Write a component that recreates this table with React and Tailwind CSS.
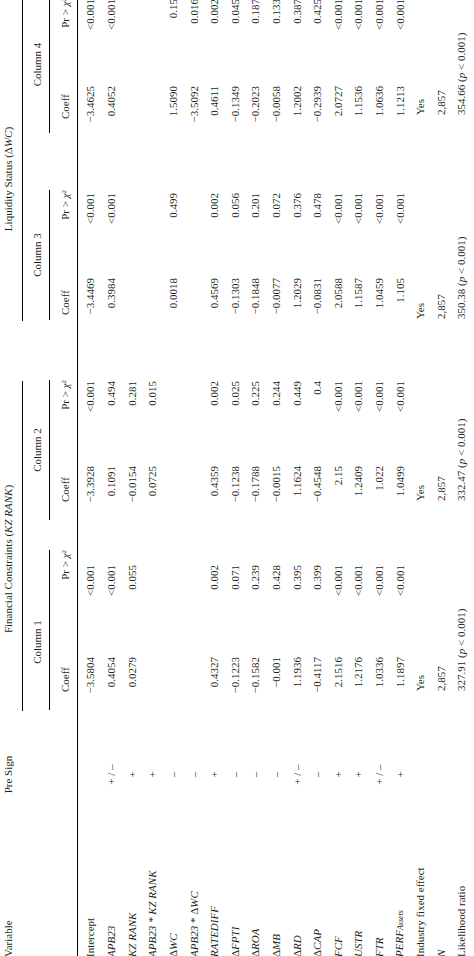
import React from "react";

// column cells (table is laid out unrotated, then turned a quarter turn)
const coeffCell = ["w-[115px] pr-[30px]", "w-[100px] pr-[29px]", "w-[100px] pr-[31px]", "w-[100px] pr-[29px]"];
const prCell = ["w-[90px] pr-[28px]", "w-[90px] pr-[34px]", "w-[90px] pr-[36px]", "w-[90px] pr-[32px]"];
const coeffHead = ["w-[115px] pl-[49px]", "w-[100px] pl-[34px]", "w-[100px] pl-[31px]", "w-[100px] pl-[37px]"];
const prHead = ["w-[90px] pr-[14px]", "w-[90px] pr-[34px]", "w-[90px] pr-[34px]", "w-[90px] pr-[32px]"];
const spanCell = ["w-[205px] pl-[51px]", "w-[190px] pl-[36px]", "w-[190px] pl-[28px]", "w-[190px] pl-[42px]"];

const I = ({ children }) => <span className="italic">{children}</span>;

const P = () => (
  <>
    (<I>p</I> &lt; 0.001)
  </>
);

const rows = [
  { label: "Intercept", vals: [["−3.5804", "<0.001"], ["−3.3928", "<0.001"], ["−3.4469", "<0.001"], ["−3.4625", "<0.001"]] },
  { label: <I>APB23</I>, sign: "+ / –", vals: [["0.4054", "<0.001"], ["0.1091", "0.494"], ["0.3984", "<0.001"], ["0.4052", "<0.001"]] },
  { label: <I>KZ RANK</I>, sign: "+", vals: [["0.0279", "0.055"], ["−0.0154", "0.281"], [], []] },
  { label: <I>APB23 * KZ RANK</I>, sign: "+", vals: [[], ["0.0725", "0.015"], [], []] },
  { label: <>Δ<I>WC</I></>, sign: "–", vals: [[], [], ["0.0018", "0.499"], ["1.5090", "0.15"]] },
  { label: <><I>APB23</I> * Δ<I>WC</I></>, sign: "–", vals: [[], [], [], ["−3.5092", "0.016"]] },
  { label: <I>RATEDIFF</I>, sign: "+", vals: [["0.4327", "0.002"], ["0.4359", "0.002"], ["0.4569", "0.002"], ["0.4611", "0.002"]] },
  { label: <>Δ<I>FPTI</I></>, sign: "–", vals: [["−0.1223", "0.071"], ["−0.1238", "0.025"], ["−0.1303", "0.056"], ["−0.1349", "0.045"]] },
  { label: <>Δ<I>ROA</I></>, sign: "–", vals: [["−0.1582", "0.239"], ["−0.1788", "0.225"], ["−0.1848", "0.201"], ["−0.2023", "0.187"]] },
  { label: <>Δ<I>MB</I></>, sign: "–", vals: [["−0.001", "0.428"], ["−0.0015", "0.244"], ["−0.0077", "0.072"], ["−0.0058", "0.133"]] },
  { label: <>Δ<I>RD</I></>, sign: "+ / –", vals: [["1.1936", "0.395"], ["1.1624", "0.449"], ["1.2029", "0.376"], ["1.2002", "0.387"]] },
  { label: <>Δ<I>CAP</I></>, sign: "–", vals: [["−0.4117", "0.399"], ["−0.4548", "0.4"], ["−0.0831", "0.478"], ["−0.2939", "0.425"]] },
  { label: <I>FCF</I>, sign: "+", vals: [["2.1516", "<0.001"], ["2.15", "<0.001"], ["2.0588", "<0.001"], ["2.0727", "<0.001"]] },
  { label: <I>USTR</I>, sign: "+", vals: [["1.2176", "<0.001"], ["1.2409", "<0.001"], ["1.1587", "<0.001"], ["1.1536", "<0.001"]] },
  { label: <I>FTR</I>, sign: "+ / –", vals: [["1.0336", "<0.001"], ["1.022", "<0.001"], ["1.0459", "<0.001"], ["1.0636", "<0.001"]] },
  {
    label: (
      <I>
        PERF<span className="text-[8px]">Assets</span>
      </I>
    ),
    sign: "+",
    vals: [["1.1897", "<0.001"], ["1.0499", "<0.001"], ["1.105", "<0.001"], ["1.1213", "<0.001"]],
  },
  { label: "Industry fixed effect", span: ["Yes", "Yes", "Yes", "Yes"] },
  { label: <I>N</I>, span: ["2,857", "2,857", "2,857", "2,857"] },
  {
    label: "Likelihood ratio",
    span: [
      <>327.91 <P /></>,
      <>332.47 <P /></>,
      <>350.38 <P /></>,
      <>354.66 <P /></>,
    ],
  },
];

const Chi = () => (
  <>
    Pr &gt; <I>χ</I>
    <sup className="text-[7px]">2</sup>
  </>
);

export default function App() {
  return (
    <div className="h-[956px] w-[474px] overflow-hidden bg-white">
      <div className="h-[474px] w-[990px] origin-top-left -rotate-90 translate-y-[956px] font-['Liberation_Serif',serif] text-[11px] text-[#231f20]">
        {/* ===== header row 1 ===== */}
        <div className="flex h-[23px] leading-[16px]">
          <div className="w-[150px] shrink-0 -ml-[1px]">Variable</div>
          <div className="w-[65px] shrink-0 text-center">Pre Sign</div>
          <div className="w-[31px] shrink-0" />
          <div className="w-[330px] shrink-0 border-b border-black pr-[26px] text-center">
            Financial Constraints (<I>KZ RANK</I>)
          </div>
          <div className="w-[60px] shrink-0" />
          <div className="w-[340px] shrink-0 border-b border-black pr-[56px] text-center">
            Liquidity Status (Δ<I>WC</I>)
          </div>
        </div>

        {/* ===== header row 2 ===== */}
        <div className="flex h-[27px] pt-[6px] leading-[16px]">
          <div className="w-[246px] shrink-0" />
          <div className="w-[160px] shrink-0 border-b border-black pr-[24px] text-center">Column 1</div>
          <div className="w-[30px] shrink-0" />
          <div className="w-[140px] shrink-0 border-b border-black text-center">Column 2</div>
          <div className="w-[60px] shrink-0" />
          <div className="w-[130px] shrink-0 border-b border-black text-center">Column 3</div>
          <div className="w-[57px] shrink-0" />
          <div className="w-[153px] shrink-0 border-b border-black pr-[16px] text-center">Column 4</div>
        </div>

        {/* ===== header row 3 ===== */}
        <div className="flex h-[28px] border-b border-black pt-[7px] leading-[16px]">
          <div className="w-[215px] shrink-0" />
          {[0, 1, 2, 3].map((g) => (
            <React.Fragment key={g}>
              <div className={`${coeffHead[g]} shrink-0 whitespace-nowrap`}>Coeff</div>
              <div className={`${prHead[g]} shrink-0 whitespace-nowrap text-right`}>
                <Chi />
              </div>
            </React.Fragment>
          ))}
        </div>

        {/* ===== body ===== */}
        {rows.map((row, r) => (
          <div
            key={r}
            className={`flex items-center ${r === 0 ? "h-[23px]" : "h-[20.6px]"} leading-[14px]`}
          >
            <div className="w-[150px] shrink-0 -ml-[1px] whitespace-nowrap">{row.label}</div>
            <div className="w-[65px] shrink-0 text-center whitespace-nowrap">{row.sign}</div>
            {row.span
              ? row.span.map((v, g) => (
                  <div key={g} className={`${spanCell[g]} shrink-0 whitespace-nowrap`}>
                    {v}
                  </div>
                ))
              : row.vals.map((v, g) => (
                  <React.Fragment key={g}>
                    <div className={`${coeffCell[g]} shrink-0 whitespace-nowrap text-right`}>{v[0]}</div>
                    <div className={`${prCell[g]} shrink-0 whitespace-nowrap text-right`}>{v[1]}</div>
                  </React.Fragment>
                ))}
          </div>
        ))}
      </div>
    </div>
  );
}
